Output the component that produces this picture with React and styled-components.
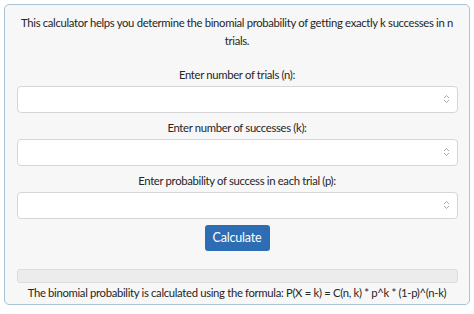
import React from "react";
import styled, { createGlobalStyle } from "styled-components";

const Global = createGlobalStyle`
  html, body { margin: 0; padding: 0; background: #ffffff; }
  body { font-family: Lato, "Liberation Sans", sans-serif; }
  * { box-sizing: border-box; }
`;

const Page = styled.div`
  padding: 4px 4px 0 4px;
  width: 474px;
`;

const Card = styled.div`
  width: 466px;
  height: 301px;
  border: 1.5px solid #a9c3d4;
  border-radius: 5px;
  background: #f7f7f7;
  padding: 8.5px 11.5px 0 11.5px;
  display: flex;
  flex-direction: column;
  align-items: center;
  color: #262626;
  font-size: 11.3px;
  letter-spacing: -0.33px;
`;

const Intro = styled.p`
  margin: 0 0 17px 0;
  text-align: center;
  line-height: 18px;
  padding: 0 4px;
`;

const Label = styled.label`
  display: block;
  text-align: center;
  line-height: 16px;
  margin-bottom: 3px;
`;

const Field = styled.div`
  width: 100%;
  display: flex;
  flex-direction: column;
  align-items: stretch;
  margin-bottom: 7px;
`;

const InputBox = styled.div`
  height: 27px;
  background: #fff;
  border: 1px solid #d6d6d6;
  border-radius: 4px;
  display: flex;
  align-items: center;
  justify-content: flex-end;
  padding-right: 7px;
`;

const Spinner = styled.svg`
  width: 7px;
  height: 10px;
`;

const Button = styled.button`
  margin-top: -1px;
  height: 26px;
  width: 65px;
  padding: 0;
  background: #2d6db4;
  border: none;
  border-radius: 3px;
  color: #fff;
  font-family: inherit;
  font-size: 12.5px;
  letter-spacing: -0.2px;
`;

const Progress = styled.div`
  width: 100%;
  height: 14px;
  margin-top: 18px;
  background: #ececec;
  border: 1px solid #dcdcdc;
  border-radius: 3px;
`;

const Formula = styled.p`
  margin: 2px 0 0 0;
  text-align: center;
  line-height: 16px;
  white-space: nowrap;
`;

const SpinIcon = () => (
  <Spinner viewBox="0 0 7 10">
    <path d="M1 4 L3.5 1.5 L6 4" fill="none" stroke="#a8a8a8" strokeWidth="1" />
    <path d="M1 6 L3.5 8.5 L6 6" fill="none" stroke="#a8a8a8" strokeWidth="1" />
  </Spinner>
);

const NumberField = ({ label }) => (
  <Field>
    <Label>{label}</Label>
    <InputBox>
      <SpinIcon />
    </InputBox>
  </Field>
);

export default function App() {
  return (
    <>
      <Global />
      <Page>
        <Card>
          <Intro>
            This calculator helps you determine the binomial probability of getting exactly k successes in n trials.
          </Intro>
          <NumberField label="Enter number of trials (n):" />
          <NumberField label="Enter number of successes (k):" />
          <NumberField label="Enter probability of success in each trial (p):" />
          <Button>Calculate</Button>
          <Progress />
          <Formula>
            The binomial probability is calculated using the formula: P(X = k) = C(n, k) * p^k * (1-p)^(n-k)
          </Formula>
        </Card>
      </Page>
    </>
  );
}
